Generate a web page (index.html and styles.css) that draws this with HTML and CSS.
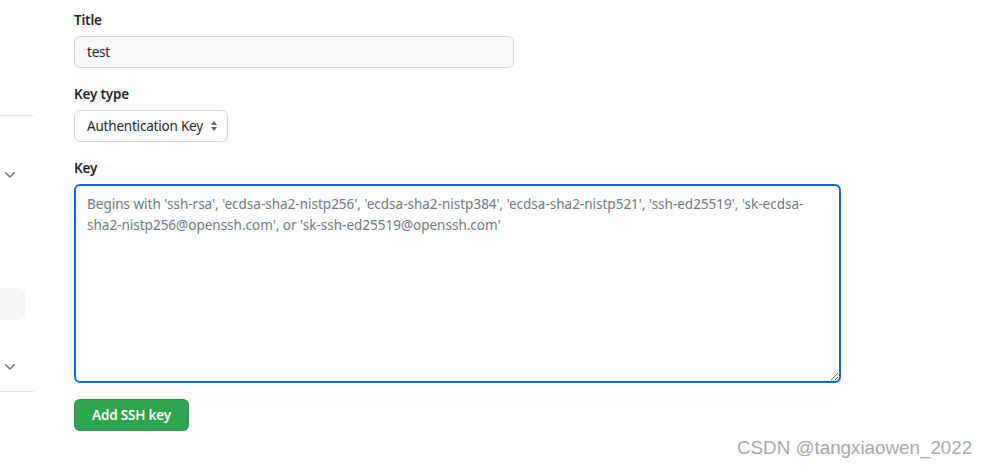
FILE: index.html
```html
<!DOCTYPE html>
<html lang="en">
<head>
<meta charset="utf-8">
<title>Add new SSH Key</title>
<link rel="stylesheet" href="styles.css">
</head>
<body>
<div class="page">
  <nav class="sidebar">
    <div class="divider"></div>
    <div class="nav-row first">
      <svg class="chev" viewBox="0 0 16 16" width="16" height="16"><path d="M12.78 5.22a.749.749 0 0 1 0 1.06l-4.25 4.25a.749.749 0 0 1-1.06 0L3.22 6.28a.749.749 0 1 1 1.06-1.06L8 8.939l3.72-3.719a.749.749 0 0 1 1.06 0Z"/></svg>
    </div>
    <div class="nav-selected"></div>
    <div class="nav-row second">
      <svg class="chev" viewBox="0 0 16 16" width="16" height="16"><path d="M12.78 5.22a.749.749 0 0 1 0 1.06l-4.25 4.25a.749.749 0 0 1-1.06 0L3.22 6.28a.749.749 0 1 1 1.06-1.06L8 8.939l3.72-3.719a.749.749 0 0 1 1.06 0Z"/></svg>
    </div>
    <div class="divider bottom"></div>
  </nav>
  <main class="form">
    <div class="field">
      <label class="label">Title</label>
      <div class="input title-input">test</div>
    </div>
    <div class="field">
      <label class="label">Key type</label>
      <div class="select">
        <span class="select-text">Authentication Key</span>
        <svg class="updown" viewBox="0 0 8 12" width="8" height="12"><path d="M4 1 7 5H1Z"/><path d="M4 11 1 7h6Z"/></svg>
      </div>
    </div>
    <div class="field">
      <label class="label">Key</label>
      <textarea class="textarea" placeholder="Begins with 'ssh-rsa', 'ecdsa-sha2-nistp256', 'ecdsa-sha2-nistp384', 'ecdsa-sha2-nistp521', 'ssh-ed25519', 'sk-ecdsa-sha2-nistp256@openssh.com', or 'sk-ssh-ed25519@openssh.com'"></textarea>
    </div>
    <div class="actions">
      <button class="btn-primary" type="button">Add SSH key</button>
    </div>
  </main>
</div>
<div class="watermark">CSDN @tangxiaowen_2022</div>
</body>
</html>
```

FILE: styles.css
```css
* { box-sizing: border-box; }
html, body {
  margin: 0;
  padding: 0;
  background: #ffffff;
}
body {
  font-family: "Segoe UI", "Noto Sans", "Liberation Sans", sans-serif;
  font-size: 13.5px;
  letter-spacing: -0.2px;
  color: #1f2328;
  width: 989px;
  height: 469px;
  overflow: hidden;
  position: relative;
}
.page {
  display: grid;
  grid-template-columns: 34px 767px;
  column-gap: 40px;
}
.sidebar {
  display: flex;
  flex-direction: column;
  padding-top: 115px;
}
.divider {
  height: 1px;
  background: #e1e4e8;
}
.nav-row {
  height: 32px;
  display: flex;
  align-items: center;
  padding-left: 2px;
}
.nav-row.first { margin-top: 43px; }
.nav-row.second { margin-top: 31px; }
.chev { fill: #656d76; }
.nav-selected {
  margin-top: 97px;
  height: 32px;
  width: 25px;
  background: #f3f4f6;
  border-radius: 0 6px 6px 0;
}
.divider.bottom { margin-top: 8px; }

.form {
  display: flex;
  flex-direction: column;
  padding-top: 10px;
}
.field {
  display: flex;
  flex-direction: column;
  align-items: flex-start;
  gap: 6px;
  margin-bottom: 16px;
}
.label {
  font-weight: 600;
  font-size: 13.5px;
  line-height: 20px;
}
.input {
  height: 32px;
  width: 440px;
  border: 1px solid #d0d7de;
  border-radius: 6px;
  background: #f6f8fa;
  padding: 0 12px;
  line-height: 30px;
}
.select {
  height: 32px;
  width: 154px;
  border: 1px solid #d0d7de;
  border-radius: 6px;
  background: #ffffff;
  padding: 0 9px 0 12px;
  display: flex;
  align-items: center;
  justify-content: space-between;
  white-space: nowrap;
}
.updown { fill: #57606a; }
.textarea {
  display: block;
  width: 767px;
  height: 199px;
  border: 2px solid #0969da;
  border-radius: 6px;
  padding: 8px 11px;
  font-family: inherit;
  font-size: 13.5px;
  letter-spacing: 0;
  line-height: 21px;
  color: #1f2328;
  background: #ffffff;
  outline: none;
  resize: vertical;
}
.textarea::placeholder { color: #6e7781; opacity: 1; }
.actions { display: flex; }
.btn-primary {
  height: 32px;
  width: 115px;
  padding: 0;
  border: 1px solid rgba(31, 35, 40, 0.15);
  border-radius: 6px;
  background: #2da44e;
  color: #ffffff;
  font-family: inherit;
  font-weight: 600;
  font-size: 13.5px;
  letter-spacing: -0.2px;
  white-space: nowrap;
}
.watermark {
  position: absolute;
  left: 737px;
  top: 437px;
  font-family: "Liberation Sans", "DejaVu Sans", sans-serif;
  font-size: 18.8px;
  letter-spacing: 0;
  color: #a8a8a8;
  text-shadow: 0 0 1px #ffffff;
}
```
